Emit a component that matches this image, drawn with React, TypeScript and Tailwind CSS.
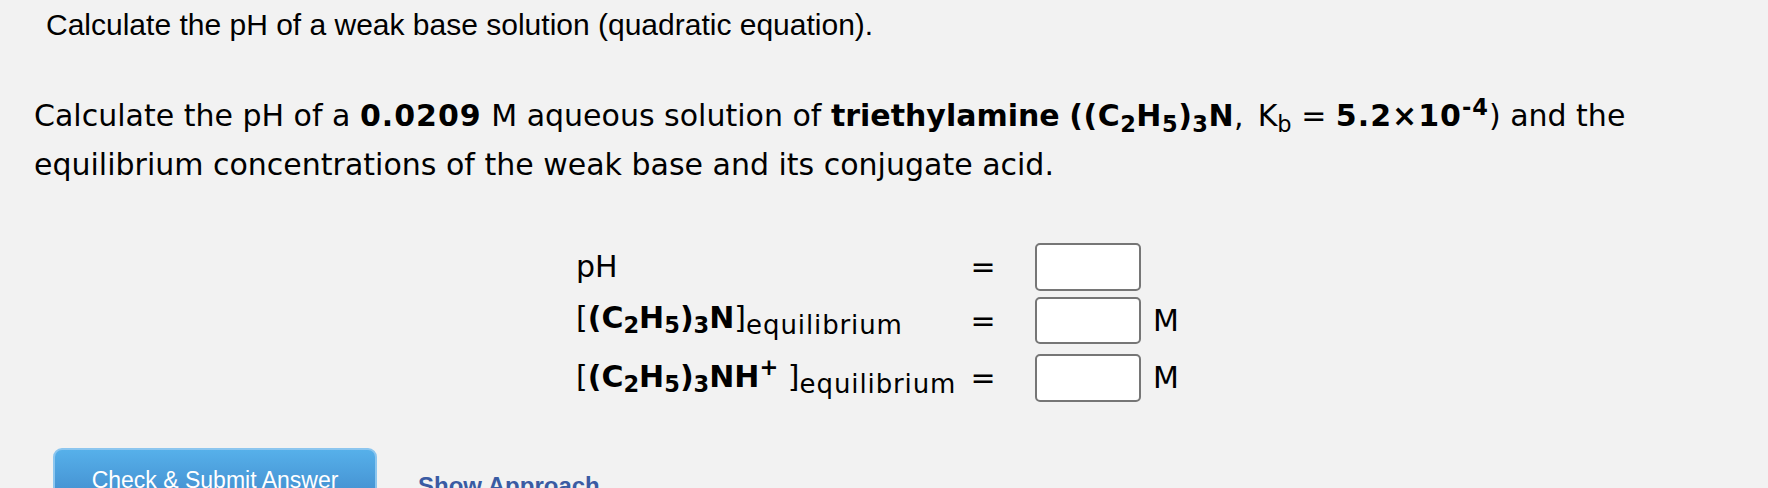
export default function App() {
  const body = { fontFamily: '"DejaVu Sans", Verdana, sans-serif' };
  return (
    <div className="w-full h-[488px] overflow-hidden bg-[#f2f2f2] text-black">
      {/* Title */}
      <h1
        className="pl-[46px] pt-[8px] text-[30px] leading-[34px] font-normal"
        style={{ fontFamily: '"Liberation Sans", Arial, sans-serif' }}
      >
        Calculate the pH of a weak base solution (quadratic equation).
      </h1>

      {/* Question */}
      <p className="mt-[49px] pl-[34px] text-[30px] leading-[49px]" style={body}>
        Calculate the pH of a <b className="tracking-[1px]">0.0209</b> M aqueous solution of{' '}
        <b>triethylamine</b>{' '}
        <b className="tracking-[0.5px]">
          ((C<sub>2</sub>H<sub>5</sub>)<sub>3</sub>N
        </b>
        ,<span className="ml-[14px]">K</span>
        <sub>b</sub> = <b className="tracking-[1px]">5.2×10<sup>-4</sup></b>) and the
        <br />
        equilibrium concentrations of the weak base and its conjugate acid.
      </p>

      {/* Answer rows */}
      <div className="mt-[54px] ml-[576px] flex flex-col text-[30px]" style={body}>
        <div className="flex items-center h-[48px]">
          <div className="w-[392px] leading-[34px]">pH</div>
          <div className="w-[30px] text-center leading-[34px]">=</div>
          <input className="ml-[37px] w-[106px] h-[48px] bg-white border-2 border-[#767676] rounded-[5px]" />
        </div>
        <div className="flex items-center h-[47px] mt-[6px]">
          <div className="w-[392px] leading-[34px] pb-[6px] whitespace-nowrap">
            [<b>(C<sub>2</sub>H<sub>5</sub>)<sub>3</sub>N</b>]
            <sub className="text-[26px] tracking-[0.9px]">equilibrium</sub>
          </div>
          <div className="w-[30px] text-center leading-[34px]">=</div>
          <input className="ml-[37px] w-[106px] h-[47px] bg-white border-2 border-[#767676] rounded-[5px]" />
          <span className="ml-[12px] leading-[34px]">M</span>
        </div>
        <div className="flex items-center h-[48px] mt-[10px]">
          <div className="w-[392px] leading-[34px] pb-[3px] whitespace-nowrap">
            [<b>(C<sub>2</sub>H<sub>5</sub>)<sub>3</sub>NH<sup>+</sup></b> ]
            <sub className="text-[26px] tracking-[0.9px]">equilibrium</sub>
          </div>
          <div className="w-[30px] text-center leading-[34px]">=</div>
          <input className="ml-[37px] w-[106px] h-[48px] bg-white border-2 border-[#767676] rounded-[5px]" />
          <span className="ml-[12px] leading-[34px]">M</span>
        </div>
      </div>

      {/* Actions */}
      <div className="mt-[46px] ml-[53px] flex items-start">
        <button
          className="w-[324px] h-[64px] rounded-[9px] border-2 border-[#8cc6ef] bg-gradient-to-b from-[#56b0ea] to-[#3f86c8] text-white text-[23px]"
          style={{ fontFamily: '"Liberation Sans", Arial, sans-serif' }}
        >
          Check &amp; Submit Answer
        </button>
        <a
          className="ml-[41px] pt-[20px] text-[24px] font-bold text-[#3a5ba3]"
          style={{ fontFamily: '"Liberation Sans", Arial, sans-serif' }}
        >
          Show Approach
        </a>
      </div>
    </div>
  );
}
